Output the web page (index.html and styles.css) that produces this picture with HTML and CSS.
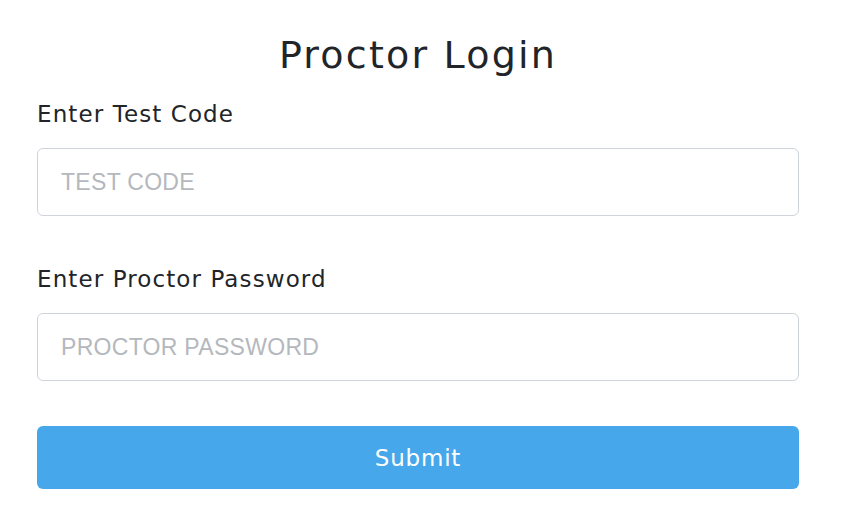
FILE: index.html
```html
<!DOCTYPE html>
<html lang="en">
<head>
    <meta charset="UTF-8">
    <meta name="viewport" content="width=device-width, initial-scale=1.0">
    <title>Proctor Login</title>
    <link rel="stylesheet" href="styles.css">
</head>
<body>
    <main class="login">
        <h1 class="login-title">Proctor Login</h1>
        <form class="login-form">
            <div class="form-group">
                <label class="form-label" for="test-code">Enter Test Code</label>
                <input class="form-input" id="test-code" type="text" placeholder="TEST CODE">
            </div>
            <div class="form-group">
                <label class="form-label" for="proctor-password">Enter Proctor Password</label>
                <input class="form-input" id="proctor-password" type="password" placeholder="PROCTOR PASSWORD">
            </div>
            <button class="submit-button" type="button">Submit</button>
        </form>
    </main>
</body>
</html>
```

FILE: styles.css
```css
/* base */
body {
    font-family: "DejaVu Sans", "Open Sans", sans-serif;
    margin: 0;
    background-color: #fff;
    color: #212529;
}

.login {
    width: 762px;
    padding: 0 0 0 37px;
}

.login-title {
    margin: 24px 0 10px 0;
    font-size: 38px;
    font-weight: 400;
    line-height: 62px;
    letter-spacing: 2.2px;
    text-align: center;
}

/* form */
.form-group {
    display: flex;
    flex-direction: column;
    margin-bottom: 45px;
}
.form-label {
    font-size: 23px;
    line-height: 32px;
    letter-spacing: 1.1px;
    padding-top: 2px;
    margin: 0 0 18px 0;
}
.form-input {
    height: 68px;
    box-sizing: border-box;
    padding: 0 23px;
    border: 1px solid #ced4da;
    border-radius: 6px;
    font-family: "Liberation Sans", Arial, sans-serif;
    font-size: 23px;
    letter-spacing: 0.3px;
    color: #212529;
}
.form-input::placeholder {
    color: #b4b8bd;
}

.submit-button {
    display: block;
    width: 100%;
    height: 63px;
    border: none;
    border-radius: 6px;
    background-color: #47a7eb;
    color: #fff;
    font-family: "DejaVu Sans", "Open Sans", sans-serif;
    font-size: 23px;
    letter-spacing: 0.8px;
    cursor: pointer;
}
```
